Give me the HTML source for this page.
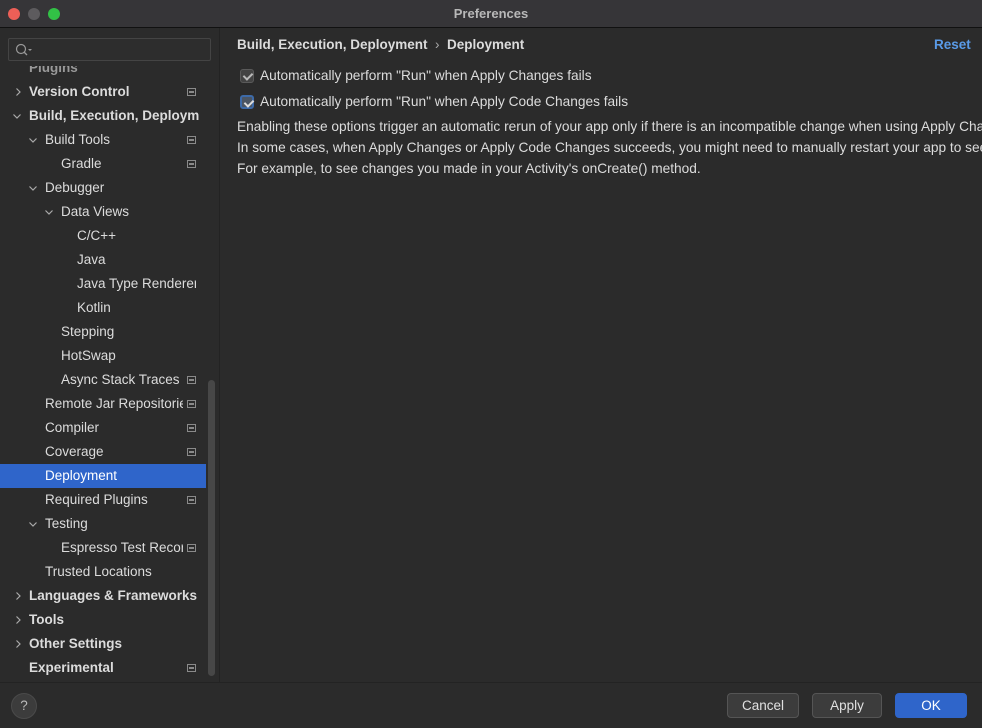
<!DOCTYPE html>
<html><head><style>
*{margin:0;padding:0;box-sizing:border-box}
body{width:982px;height:728px;background:#2b2b2b;font-family:"Liberation Sans",sans-serif;color:#dcdcdc;font-size:13.5px;position:relative;overflow:hidden}
.title{position:absolute;left:0;top:0;width:982px;height:28px;background:#363538;border-bottom:1px solid #111;text-align:center;line-height:27px;color:#b8b8b8;font-size:13px;font-weight:bold}
.dot{position:absolute;top:8px;width:12px;height:12px;border-radius:50%}
.side{position:absolute;left:0;top:28px;width:220px;height:654px;background:#2b2b2b;border-right:1px solid #232323;overflow:hidden}
.stop{position:absolute;left:0;top:0;width:220px;height:38px;background:#2b2b2b;z-index:2}
.search{position:absolute;left:8px;top:10px;width:203px;height:23px;border:1px solid #444;background:#2d2d2d;border-radius:2px;z-index:3}
.row{position:absolute;left:0;width:206px;height:24px;line-height:24px;white-space:nowrap;overflow:hidden}
.b{font-weight:bold}
.sel{background:#2f65ca;color:#fff}
.arr{position:absolute;top:8px;width:8px;height:8px}
.ic{position:absolute;left:187px;top:8px;width:9px;height:8px;border:1px solid #8a8a8a}
.ic:after{content:"";position:absolute;left:1px;top:2px;width:5px;height:2px;background:#8a8a8a}
.scroll{position:absolute;left:208px;top:352px;width:7px;height:296px;background:#474747;border-radius:4px}
.cb{position:absolute;left:240px;width:14px;height:14px;border-radius:3px;background:#4a4a4a;border:1px solid #666}
.cb:after{content:"";position:absolute;left:4px;top:1px;width:4px;height:7px;border:solid #ddd;border-width:0 2px 2px 0;transform:rotate(45deg)}
.foot{position:absolute;left:0;top:682px;width:982px;height:46px;background:#2b2b2b;border-top:1px solid #232323}
.btn{position:absolute;top:693px;height:25px;border-radius:4px;background:#3c3c3c;border:1px solid #555;text-align:center;line-height:23px;color:#e0e0e0;font-size:13.5px}
.t{position:absolute;white-space:nowrap;font-size:13.7px}
</style></head><body>
<svg width="0" height="0" style="position:absolute"><defs>
<symbol id="r" viewBox="0 0 8 8"><path d="M2.5 0.5L6 4 2.5 7.5" stroke="#aaa" fill="none" stroke-width="1.2"/></symbol>
<symbol id="d" viewBox="0 0 8 8"><path d="M0.5 2.5L4 6 7.5 2.5" stroke="#aaa" fill="none" stroke-width="1.2"/></symbol>
</defs></svg>
<div class="title">Preferences
<div class="dot" style="left:8px;background:#ec5f57"></div>
<div class="dot" style="left:28px;background:#5d5b5e"></div>
<div class="dot" style="left:48px;background:#32c146"></div>
</div>
<div class="side">
<div class="stop"></div>
<div class="search"><svg width="20" height="20" style="position:absolute;left:4px;top:2px"><circle cx="8" cy="8" r="4.5" stroke="#999" fill="none" stroke-width="1.2"/><line x1="11" y1="11" x2="14" y2="14" stroke="#999" stroke-width="1.3"/><path d="M15 8l2 2 2-2z" fill="#999"/></svg></div>
<div class="row b" style="top:28px;padding-left:29px;color:#999">Plugins</div>
<div class="row b" style="top:52px;padding-left:29px"><svg class="arr" style="left:14px"><use href="#r"/></svg>Version Control<i class="ic"></i></div>
<div class="row b" style="top:76px;padding-left:29px"><svg class="arr" style="left:13px"><use href="#d"/></svg>Build, Execution, Deploym</div>
<div class="row" style="top:100px;padding-left:45px"><svg class="arr" style="left:29px"><use href="#d"/></svg>Build Tools<i class="ic"></i></div>
<div class="row" style="top:124px;padding-left:61px">Gradle<i class="ic"></i></div>
<div class="row" style="top:148px;padding-left:45px"><svg class="arr" style="left:29px"><use href="#d"/></svg>Debugger</div>
<div class="row" style="top:172px;padding-left:61px"><svg class="arr" style="left:45px"><use href="#d"/></svg>Data Views</div>
<div class="row" style="top:196px;padding-left:77px">C/C++</div>
<div class="row" style="top:220px;padding-left:77px">Java</div>
<div class="row" style="top:244px;padding-left:77px;width:196px">Java Type Renderers</div>
<div class="row" style="top:268px;padding-left:77px">Kotlin</div>
<div class="row" style="top:292px;padding-left:61px">Stepping</div>
<div class="row" style="top:316px;padding-left:61px">HotSwap</div>
<div class="row" style="top:340px;padding-left:61px">Async Stack Traces<i class="ic"></i></div>
<div class="row" style="top:364px;padding-left:45px"><span style="display:inline-block;width:138px;overflow:hidden;vertical-align:top">Remote Jar Repositories</span><i class="ic"></i></div>
<div class="row" style="top:388px;padding-left:45px">Compiler<i class="ic"></i></div>
<div class="row" style="top:412px;padding-left:45px">Coverage<i class="ic"></i></div>
<div class="row sel" style="top:436px;padding-left:45px">Deployment</div>
<div class="row" style="top:460px;padding-left:45px">Required Plugins<i class="ic"></i></div>
<div class="row" style="top:484px;padding-left:45px"><svg class="arr" style="left:29px"><use href="#d"/></svg>Testing</div>
<div class="row" style="top:508px;padding-left:61px"><span style="display:inline-block;width:122px;overflow:hidden;vertical-align:top">Espresso Test Recorder</span><i class="ic"></i></div>
<div class="row" style="top:532px;padding-left:45px">Trusted Locations</div>
<div class="row b" style="top:556px;padding-left:29px"><svg class="arr" style="left:14px"><use href="#r"/></svg>Languages &amp; Frameworks</div>
<div class="row b" style="top:580px;padding-left:29px"><svg class="arr" style="left:14px"><use href="#r"/></svg>Tools</div>
<div class="row b" style="top:604px;padding-left:29px"><svg class="arr" style="left:14px"><use href="#r"/></svg>Other Settings</div>
<div class="row b" style="top:628px;padding-left:29px">Experimental<i class="ic"></i></div>
<div class="scroll"></div>
</div>
<div class="t b" style="left:237px;top:37px;font-size:13.5px">Build, Execution, Deployment &nbsp;<span style="color:#aaa;font-weight:normal">›</span>&nbsp; Deployment</div>
<div class="t b" style="left:934px;top:37px;color:#5a9be8;font-size:13.5px">Reset</div>
<div class="cb" style="top:69px;opacity:.8"></div>
<div class="t" style="left:260px;top:68px">Automatically perform "Run" when Apply Changes fails</div>
<div class="cb" style="top:95px;border:2px solid #3d6aa8;background:#4b5563"></div>
<div class="t" style="left:260px;top:94px">Automatically perform "Run" when Apply Code Changes fails</div>
<div class="t" style="left:237px;top:116px;line-height:21px">Enabling these options trigger an automatic rerun of your app only if there is an incompatible change when using Apply Changes<br>In some cases, when Apply Changes or Apply Code Changes succeeds, you might need to manually restart your app to see<br>For example, to see changes you made in your Activity's onCreate() method.</div>
<div class="foot"></div>
<div style="position:absolute;left:11px;top:693px;width:26px;height:26px;border-radius:50%;background:#3c3c3c;border:1px solid #4a4a4a;text-align:center;line-height:24px;color:#bbb">?</div>
<div class="btn" style="left:727px;width:72px">Cancel</div>
<div class="btn" style="left:812px;width:70px">Apply</div>
<div class="btn" style="left:895px;width:72px;background:#2f65ca;border-color:#2f65ca;color:#fff">OK</div>
</body></html>
